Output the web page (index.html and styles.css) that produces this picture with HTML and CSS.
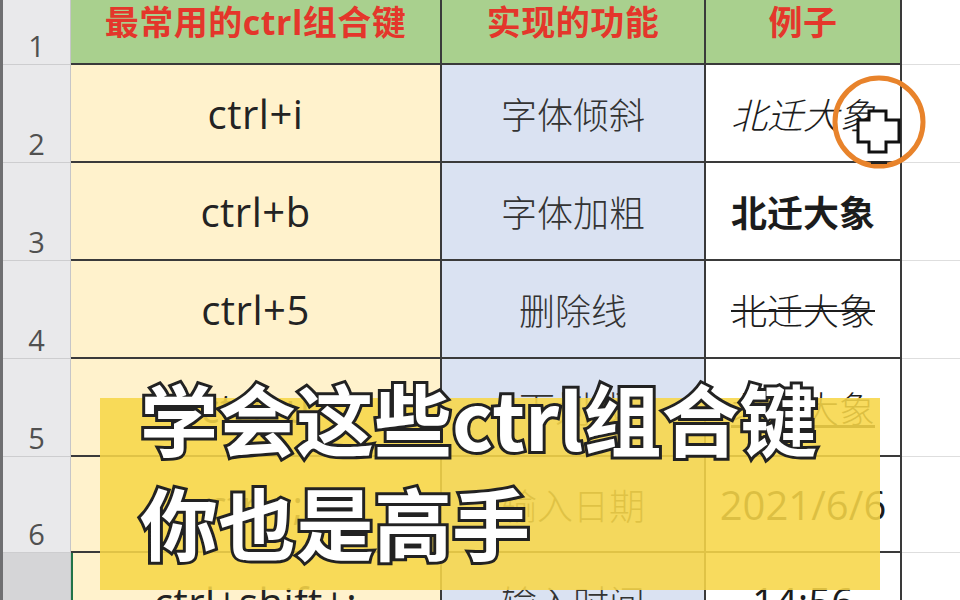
FILE: index.html
```html
<!DOCTYPE html>
<html lang="zh-CN">
<head>
<meta charset="utf-8">
<title>ctrl组合键</title>
<link rel="stylesheet" href="styles.css">
</head>
<body>
<div class="sheet">
  <div class="grid">
    <div class="edge"></div><div class="rh">1</div>
    <div class="c hd">最常用的ctrl组合键</div><div class="c hd">实现的功能</div><div class="c hd">例子</div><div class="rest"></div>

    <div class="edge"></div><div class="rh">2</div>
    <div class="c ka">ctrl+i</div><div class="c fb">字体倾斜</div><div class="c ex it">北迁大象</div><div class="rest"></div>

    <div class="edge"></div><div class="rh">3</div>
    <div class="c ka">ctrl+b</div><div class="c fb">字体加粗</div><div class="c ex bd">北迁大象</div><div class="rest"></div>

    <div class="edge"></div><div class="rh">4</div>
    <div class="c ka">ctrl+5</div><div class="c fb">删除线</div><div class="c ex st">北迁大象</div><div class="rest"></div>

    <div class="edge"></div><div class="rh">5</div>
    <div class="c ka">ctrl+u</div><div class="c fb">下划线</div><div class="c ex ul">北迁大象</div><div class="rest"></div>

    <div class="edge"></div><div class="rh">6</div>
    <div class="c ka">ctrl+;</div><div class="c fb">输入日期</div><div class="c ex lat">2021/6/6</div><div class="rest"></div>

    <div class="edge"></div><div class="rh sel">7</div>
    <div class="c ka active">ctrl+shift+;</div><div class="c fb">输入时间</div><div class="c ex lat">14:56</div><div class="rest"></div>
  </div>

  <div class="caption">
    <div class="caption-text">学会这些ctrl组合键<br>你也是高手</div>
  </div>

  <svg class="cursor" width="110" height="110" viewBox="0 0 110 110">
    <circle cx="55" cy="55" r="44" fill="none" stroke="#e8832b" stroke-width="5"/>
    <rect x="47" y="94" width="16" height="3" fill="#222"/>
    <path d="M45 45 V44 H62 V53 H75 V75 H62 V85 H45 V75 H34 V53 H45 Z" fill="#fff" stroke="#111" stroke-width="3" stroke-linejoin="miter"/>
  </svg>
</div>
</body>
</html>
```

FILE: styles.css
```css
html, body {
  margin: 0;
  padding: 0;
  background: #ffffff;
}

.sheet {
  position: relative;
  width: 960px;
  height: 600px;
  overflow: hidden;
  background: #ffffff;
}

.grid {
  display: grid;
  grid-template-columns: 3px 68px 371px 264px 196px 1fr;
  grid-template-rows: 65px 98px 98px 98px 98px 96px 98px;
}

.edge {
  background: #6f6f71;
}

.rh {
  background: #e9e9eb;
  border-right: 1px solid #c6c6c8;
  border-bottom: 1px solid #cdcdcf;
  box-sizing: border-box;
  display: flex;
  justify-content: center;
  align-items: flex-end;
  padding-bottom: 2px;
  font-family: "Open Sans", "Noto Sans", sans-serif;
  font-size: 29px;
  line-height: 32px;
  color: #505050;
}

.rh.sel {
  background: #d5d5d7;
}

.c {
  box-sizing: border-box;
  border-right: 2px solid #3a3a3a;
  border-bottom: 2px solid #3a3a3a;
  display: flex;
  justify-content: center;
  align-items: center;
  white-space: nowrap;
}

.hd {
  background: #a9d08e;
  align-items: flex-start;
  padding-top: 1px;
  font-family: "Open Sans", "Noto Sans CJK SC", sans-serif;
  font-weight: 700;
  font-size: 34px;
  line-height: 42px;
  letter-spacing: 0.5px;
  color: #e4362b;
}

.ka {
  background: #fff2cc;
  font-family: "Open Sans", "Noto Sans CJK SC", sans-serif;
  font-size: 40px;
  letter-spacing: 0.5px;
  color: #232323;
}

.active {
  box-shadow: inset 2px 0 0 #217346;
}

.fb {
  background: #dae2f2;
  font-family: "Noto Sans CJK SC", sans-serif;
  font-size: 36px;
  font-weight: 300;
  color: #333333;
}

.ex {
  background: #ffffff;
  font-family: "Noto Sans CJK SC", sans-serif;
  font-size: 36px;
  color: #1c1c1c;
}

.ex.it {
  font-style: italic;
  font-weight: 300;
}

.ex.bd {
  font-weight: 700;
}

.ex.st {
  font-weight: 300;
  text-decoration: line-through;
  text-decoration-thickness: 2px;
}

.ex.ul {
  font-weight: 300;
  text-decoration: underline;
}

.ex.lat {
  font-family: "Open Sans", "Noto Sans CJK SC", sans-serif;
  font-size: 40px;
  font-weight: 400;
}

.rest {
  border-bottom: 1px solid #dedede;
  box-sizing: border-box;
}

.caption {
  position: absolute;
  left: 100px;
  top: 398px;
  width: 780px;
  height: 192px;
  background: rgba(247, 214, 72, 0.88);
}

.caption-text {
  position: absolute;
  left: 40px;
  top: -33px;
  font-family: "Noto Sans CJK SC", sans-serif;
  font-weight: 700;
  font-size: 78px;
  line-height: 104px;
  color: #ffffff;
  white-space: nowrap;
  -webkit-text-stroke: 6px #222222;
  paint-order: stroke fill;
}

.cursor {
  position: absolute;
  left: 824px;
  top: 67px;
}
```
